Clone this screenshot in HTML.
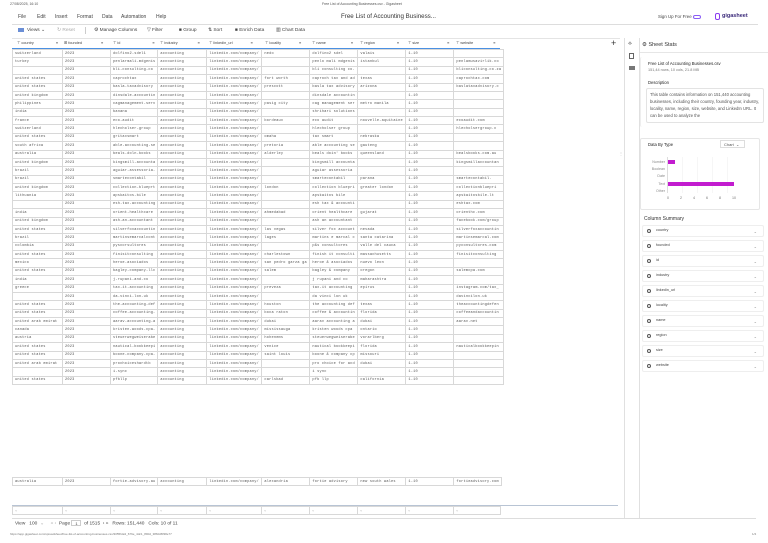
<!DOCTYPE html>
<html><head><meta charset="utf-8"><style>
*{margin:0;padding:0;box-sizing:border-box}
body{width:768px;height:543px;background:#fff;font-family:"Liberation Sans",sans-serif;color:#333;position:relative;overflow:hidden}
.a{position:absolute;white-space:nowrap}
.s4{font-size:4px;color:#555}
.m{font-size:6px;color:#444}
table{position:absolute;left:12px;border-collapse:collapse;table-layout:fixed;font-family:"Liberation Mono",monospace;font-size:3.6px;color:#555}
td{border:0.8px solid #d8d8d8;height:8.38px;line-height:6px;padding:0 2px;overflow:hidden;white-space:nowrap;letter-spacing:0.2px}
td:nth-child(3),td:nth-child(4),td:nth-child(5),td:nth-child(6){border-left:1.5px solid #ccc}
.hd{position:absolute;top:40px;height:8px;font-size:3.8px;color:#444}
.pc{position:absolute;left:640px;width:120px;border:0.8px solid #e6e6e6;border-radius:2px}
.cs{position:absolute;left:642px;width:122px;height:12px;border:0.8px solid #eee;border-radius:2px;font-size:3.8px;color:#444}
.cs span{position:absolute;left:13px;top:2px}
.cs i{position:absolute;left:4px;top:3px;width:4px;height:4px;border:0.8px solid #555;border-radius:50%}
.cs b{position:absolute;right:6px;top:3px;font-weight:normal;font-size:4px;color:#888}
</style></head><body>
<div class="a s4" style="left:10px;top:2px;font-size:3.5px">27/08/2025, 16:10</div>
<div class="a s4" style="left:322px;top:2px;font-size:3.5px">Free List of Accounting Businesses.csv - Gigasheet</div>
<div class="a m" style="left:18px;top:14px;font-size:5px">File</div>
<div class="a m" style="left:37px;top:14px;font-size:5px">Edit</div>
<div class="a m" style="left:55px;top:14px;font-size:5px">Insert</div>
<div class="a m" style="left:77px;top:14px;font-size:5px">Format</div>
<div class="a m" style="left:102px;top:14px;font-size:5px">Data</div>
<div class="a m" style="left:121px;top:14px;font-size:5px">Automation</div>
<div class="a m" style="left:156px;top:14px;font-size:5px">Help</div>
<div class="a" style="left:341px;top:13px;font-size:6.2px;color:#333">Free List of Accounting Business...</div>
<div class="a" style="left:658px;top:14px;font-size:4.4px;color:#444">Sign Up For Free</div>
<div class="a" style="left:693px;top:15px;width:8px;height:4px;border:1px solid #8a5cf6;border-radius:2px"></div>
<div class="a" style="left:715px;top:13px;width:5px;height:7px;border:1.4px solid #8a3cf0;border-radius:2px"></div>
<div class="a" style="left:722px;top:13px;font-size:5.5px;font-weight:bold;color:#3b2a7a">gigasheet</div>
<div class="a" style="left:12px;top:24px;width:746px;height:1px;background:#ddd"></div>
<div class="a" style="left:18px;top:28px;width:6px;height:4px;background:#6b8fd6"></div>
<div class="a m" style="left:27px;top:28px;font-size:4.8px">Views ⌄</div>
<div class="a" style="left:57px;top:28px;font-size:4.8px;color:#aaa">↻ Reset</div>
<div class="a" style="left:85px;top:27px;width:1px;height:7px;background:#ccc"></div>
<div class="a m" style="left:94px;top:28px;font-size:4.8px">⚙ Manage Columns</div>
<div class="a m" style="left:147px;top:28px;font-size:4.8px">▽ Filter</div>
<div class="a m" style="left:179px;top:28px;font-size:4.8px">■ Group</div>
<div class="a m" style="left:208px;top:28px;font-size:4.8px">⇅ Sort</div>
<div class="a m" style="left:235px;top:28px;font-size:4.8px">■ Enrich Data</div>
<div class="a m" style="left:276px;top:28px;font-size:4.8px">▥ Chart Data</div>
<div class="hd" style="left:17px">⊤ country<span style="margin-left:22px">≡</span></div>
<div class="hd" style="left:64px">⊞ founded<span style="margin-left:19px">≡</span></div>
<div class="hd" style="left:113px">⊤ id<span style="margin-left:32px">≡</span></div>
<div class="hd" style="left:160px">⊤ industry<span style="margin-left:20px">≡</span></div>
<div class="hd" style="left:209px">⊤ linkedin_url<span style="margin-left:18px">≡</span></div>
<div class="hd" style="left:265px">⊤ locality<span style="margin-left:18px">≡</span></div>
<div class="hd" style="left:312px">⊤ name<span style="margin-left:25px">≡</span></div>
<div class="hd" style="left:360px">⊤ region<span style="margin-left:22px">≡</span></div>
<div class="hd" style="left:408px">⊤ size<span style="margin-left:28px">≡</span></div>
<div class="hd" style="left:456px">⊤ website<span style="margin-left:20px">≡</span></div>
<div class="a" style="left:12px;top:38px;width:608px;height:1px;background:#e4e4e4"></div>
<div class="a" style="left:611px;top:38px;font-size:9px;color:#333">+</div>
<div class="a" style="left:12px;top:48px;width:488px;height:1px;background:#4a90e2"></div>
<table style="top:49px">
<colgroup><col style="width:50px"><col style="width:48px"><col style="width:47px"><col style="width:49px"><col style="width:55px"><col style="width:48px"><col style="width:48px"><col style="width:48px"><col style="width:48px"><col style="width:47px"></colgroup>
<tr><td>switzerland</td><td>2023</td><td>dolfino2-sdel1</td><td>accounting</td><td>linkedin.com/company/</td><td>nedo</td><td>dolfino2 sdel</td><td>valais</td><td>1-10</td><td></td></tr>
<tr><td>turkey</td><td>2023</td><td>penlarmali-mdgenis</td><td>accounting</td><td>linkedin.com/company/</td><td></td><td>penlo mali mdgenis</td><td>istanbul</td><td>1-10</td><td>penlamusavirlik.co</td></tr>
<tr><td></td><td>2023</td><td>bli-consulting-co</td><td>accounting</td><td>linkedin.com/company/</td><td></td><td>bli consulting co.</td><td></td><td>1-10</td><td>bliconsulting.co.za</td></tr>
<tr><td>united states</td><td>2023</td><td>caprochtax</td><td>accounting</td><td>linkedin.com/company/</td><td>fort worth</td><td>caproch tax and ad</td><td>texas</td><td>1-10</td><td>caprochtax.com</td></tr>
<tr><td>united states</td><td>2023</td><td>basla-taxadvisory</td><td>accounting</td><td>linkedin.com/company/</td><td>prescott</td><td>basla tax advisory</td><td>arizona</td><td>1-10</td><td>baslataxadvisory.c</td></tr>
<tr><td>united kingdom</td><td>2023</td><td>dinsdale-accountin</td><td>accounting</td><td>linkedin.com/company/</td><td></td><td>dinsdale accountin</td><td></td><td>1-10</td><td></td></tr>
<tr><td>philippines</td><td>2023</td><td>cagmanagement-serv</td><td>accounting</td><td>linkedin.com/company/</td><td>pasig city</td><td>cag management ser</td><td>metro manila</td><td>1-10</td><td></td></tr>
<tr><td>india</td><td>2023</td><td>banana</td><td>accounting</td><td>linkedin.com/company/</td><td></td><td>shrihari solutions</td><td></td><td>1-10</td><td></td></tr>
<tr><td>france</td><td>2023</td><td>eco-audit</td><td>accounting</td><td>linkedin.com/company/</td><td>bordeaux</td><td>eco audit</td><td>nouvelle-aquitaine</td><td>1-10</td><td>ecoaudit.com</td></tr>
<tr><td>switzerland</td><td>2023</td><td>hlecholser-group</td><td>accounting</td><td>linkedin.com/company/</td><td></td><td>hlecholser group</td><td></td><td>1-10</td><td>hlecholsergroup.c</td></tr>
<tr><td>united states</td><td>2023</td><td>gritaxsmart</td><td>accounting</td><td>linkedin.com/company/</td><td>omaha</td><td>tax smart</td><td>nebraska</td><td>1-10</td><td></td></tr>
<tr><td>south africa</td><td>2023</td><td>able-accounting-se</td><td>accounting</td><td>linkedin.com/company/</td><td>pretoria</td><td>able accounting se</td><td>gauteng</td><td>1-10</td><td></td></tr>
<tr><td>australia</td><td>2023</td><td>beals-doln-books</td><td>accounting</td><td>linkedin.com/company/</td><td>alderley</td><td>beals doin' books</td><td>queensland</td><td>1-10</td><td>bealsbooks.com.au</td></tr>
<tr><td>united kingdom</td><td>2023</td><td>kingsmill-accounta</td><td>accounting</td><td>linkedin.com/company/</td><td></td><td>kingsmill accounta</td><td></td><td>1-10</td><td>kingsmillaccountan</td></tr>
<tr><td>brazil</td><td>2023</td><td>aguiar-assessoria-</td><td>accounting</td><td>linkedin.com/company/</td><td></td><td>aguiar assessoria</td><td></td><td>1-10</td><td></td></tr>
<tr><td>brazil</td><td>2023</td><td>smartecontabil</td><td>accounting</td><td>linkedin.com/company/</td><td></td><td>smartecontabil</td><td>parana</td><td>1-10</td><td>smartecontabil.</td></tr>
<tr><td>united kingdom</td><td>2023</td><td>collection-blueprt</td><td>accounting</td><td>linkedin.com/company/</td><td>london</td><td>collection bluepri</td><td>greater london</td><td>1-10</td><td>collectionbluepri</td></tr>
<tr><td>lithuania</td><td>2023</td><td>apskaitos-bile</td><td>accounting</td><td>linkedin.com/company/</td><td></td><td>apskaitos bile</td><td></td><td>1-10</td><td>apskaitosbile.lt</td></tr>
<tr><td></td><td>2023</td><td>esh-tax-accounting</td><td>accounting</td><td>linkedin.com/company/</td><td></td><td>esh tax &amp; accounti</td><td></td><td>1-10</td><td>eshtax.com</td></tr>
<tr><td>india</td><td>2023</td><td>orient-healthcare</td><td>accounting</td><td>linkedin.com/company/</td><td>ahmedabad</td><td>orient healthcare</td><td>gujarat</td><td>1-10</td><td>orienthc.com</td></tr>
<tr><td>united kingdom</td><td>2023</td><td>ash-an-accountant</td><td>accounting</td><td>linkedin.com/company/</td><td></td><td>ash an accountant</td><td></td><td>1-10</td><td>facebook.com/group</td></tr>
<tr><td>united states</td><td>2023</td><td>silverfoxaccountin</td><td>accounting</td><td>linkedin.com/company/</td><td>las vegas</td><td>silver fox account</td><td>nevada</td><td>1-10</td><td>silverfoxaccountin</td></tr>
<tr><td>brazil</td><td>2023</td><td>martinsemarcalcont</td><td>accounting</td><td>linkedin.com/company/</td><td>lages</td><td>martins e marcal c</td><td>santa catarina</td><td>1-10</td><td>martinsemarcal.com</td></tr>
<tr><td>colombia</td><td>2023</td><td>pyscorsultores</td><td>accounting</td><td>linkedin.com/company/</td><td></td><td>p&amp;s consultores</td><td>valle del cauca</td><td>1-10</td><td>pyconsultores.com</td></tr>
<tr><td>united states</td><td>2023</td><td>finisitconsulting</td><td>accounting</td><td>linkedin.com/company/</td><td>charlestown</td><td>finish it consulti</td><td>massachusetts</td><td>1-10</td><td>finisitconsulting</td></tr>
<tr><td>mexico</td><td>2023</td><td>heroe-asociados</td><td>accounting</td><td>linkedin.com/company/</td><td>san pedro garza ga</td><td>heroe &amp; asociados</td><td>nuevo leon</td><td>1-10</td><td></td></tr>
<tr><td>united states</td><td>2023</td><td>bagley-company-llc</td><td>accounting</td><td>linkedin.com/company/</td><td>salem</td><td>bagley &amp; company</td><td>oregon</td><td>1-10</td><td>salemcpa.com</td></tr>
<tr><td>india</td><td>2023</td><td>j-rupani-and-co</td><td>accounting</td><td>linkedin.com/company/</td><td></td><td>j rupani and co</td><td>maharashtra</td><td>1-10</td><td></td></tr>
<tr><td>greece</td><td>2023</td><td>tax-it-accounting</td><td>accounting</td><td>linkedin.com/company/</td><td>preveza</td><td>tax-it accounting</td><td>epirus</td><td>1-10</td><td>instagram.com/tax_</td></tr>
<tr><td></td><td>2023</td><td>da-vinci-lon-uk</td><td>accounting</td><td>linkedin.com/company/</td><td></td><td>da vinci lon uk</td><td></td><td>1-10</td><td>davincilon.uk</td></tr>
<tr><td>united states</td><td>2023</td><td>the-accounting-def</td><td>accounting</td><td>linkedin.com/company/</td><td>houston</td><td>the accounting def</td><td>texas</td><td>1-10</td><td>theaccountingdefen</td></tr>
<tr><td>united states</td><td>2023</td><td>coffee-accounting-</td><td>accounting</td><td>linkedin.com/company/</td><td>boca raton</td><td>coffee &amp; accountin</td><td>florida</td><td>1-10</td><td>coffeeandaccountin</td></tr>
<tr><td>united arab emirat</td><td>2023</td><td>aarav-accounting-a</td><td>accounting</td><td>linkedin.com/company/</td><td>dubai</td><td>aarav accounting a</td><td>dubai</td><td>1-10</td><td>aarav.net</td></tr>
<tr><td>canada</td><td>2023</td><td>kristen-woods-cpa-</td><td>accounting</td><td>linkedin.com/company/</td><td>mississauga</td><td>kristen woods cpa</td><td>ontario</td><td>1-10</td><td></td></tr>
<tr><td>austria</td><td>2023</td><td>steuerwegweiserabe</td><td>accounting</td><td>linkedin.com/company/</td><td>hohenems</td><td>steuerwegweiserabe</td><td>vorarlberg</td><td>1-10</td><td></td></tr>
<tr><td>united states</td><td>2023</td><td>nautical-bookkeepi</td><td>accounting</td><td>linkedin.com/company/</td><td>venice</td><td>nautical bookkeepi</td><td>florida</td><td>1-10</td><td>nauticalbookkeepin</td></tr>
<tr><td>united states</td><td>2023</td><td>boone-company-cpa-</td><td>accounting</td><td>linkedin.com/company/</td><td>saint louis</td><td>boone &amp; company cp</td><td>missouri</td><td>1-10</td><td></td></tr>
<tr><td>united arab emirat</td><td>2023</td><td>prochoiceshardtb</td><td>accounting</td><td>linkedin.com/company/</td><td></td><td>pro choice for acd</td><td>dubai</td><td>1-10</td><td></td></tr>
<tr><td></td><td>2023</td><td>i-sync</td><td>accounting</td><td>linkedin.com/company/</td><td></td><td>i sync</td><td></td><td>1-10</td><td></td></tr>
<tr><td>united states</td><td>2023</td><td>pfbllp</td><td>accounting</td><td>linkedin.com/company/</td><td>carlsbad</td><td>pfb llp</td><td>california</td><td>1-10</td><td></td></tr>
</table>
<table style="top:477px">
<colgroup><col style="width:50px"><col style="width:48px"><col style="width:47px"><col style="width:49px"><col style="width:55px"><col style="width:48px"><col style="width:48px"><col style="width:48px"><col style="width:48px"><col style="width:47px"></colgroup>
<tr><td>australia</td><td>2023</td><td>fortie-advisory-au</td><td>accounting</td><td>linkedin.com/company/</td><td>alexandria</td><td>fortie advisory</td><td>new south wales</td><td>1-10</td><td>fortieadvisory.com</td></tr>
</table>
<div class="a" style="left:12px;top:505px;width:606px;height:0.8px;background:#b8c4d4"></div>
<table style="top:506px;color:#999">
<colgroup><col style="width:50px"><col style="width:48px"><col style="width:47px"><col style="width:49px"><col style="width:55px"><col style="width:48px"><col style="width:48px"><col style="width:48px"><col style="width:48px"><col style="width:47px"></colgroup>
<tr><td>⌄</td><td>⌄</td><td>⌄</td><td>⌄</td><td>⌄</td><td>⌄</td><td>⌄</td><td>⌄</td><td>⌄</td><td>⌄</td></tr>
</table>
<div class="a" style="left:12px;top:518px;width:744px;height:1px;background:#ddd"></div>
<div class="a" style="left:624px;top:38px;width:1px;height:480px;background:#e0e0e0"></div>
<div class="a" style="left:639px;top:38px;width:1px;height:480px;background:#e0e0e0"></div>
<div class="a m" style="left:15px;top:520px;font-size:4.8px">View &nbsp; 100 &nbsp;<span style="color:#aaa">⌄ &nbsp; &nbsp; « ‹</span> &nbsp;Page <span style="display:inline-block;width:10px;height:6px;border:0.6px solid #ccc;vertical-align:middle;font-size:4px;text-align:center;line-height:5px">1</span> &nbsp;of 1515 &nbsp;› » &nbsp; Rows: 151,440 &nbsp; Cols: 10 of 11</div>
<div class="a" style="left:10px;top:532px;font-size:3px;color:#777">https://app.gigasheet.com/spreadsheet/free-list-of-accounting-businesses.csv/3055fda3_676e_4dc1_890d_3860d8f38e77</div>
<div class="a" style="left:752px;top:532px;font-size:3px;color:#777">1/4</div>
<div class="a" style="left:628px;top:41px;font-size:6px;color:#555">⟡</div>
<div class="a" style="left:629px;top:53px;width:5px;height:6px;border:0.8px solid #666"></div>
<div class="a" style="left:629px;top:66px;width:6px;height:4px;background:#777"></div>
<div class="a" style="left:619px;top:151px;font-size:4px;color:#999">⋮</div>
<div class="a" style="left:642px;top:42px;font-size:5.5px;color:#333">⚙ Sheet Stats</div>
<div class="a" style="left:640px;top:52px;width:128px;height:1px;background:#e6e6e6"></div>
<div class="pc" style="top:57px;height:70px;border:none;border-left:0.8px solid #eee"></div>
<div class="a" style="left:648px;top:61px;font-size:4.2px;color:#222">Free List of Accounting Businesses.csv</div>
<div class="a" style="left:648px;top:68px;font-size:3.8px;color:#777">151,44 rows, 10 cols, 21.8 MB</div>
<div class="a" style="left:648px;top:80px;font-size:4.2px;color:#222">Description</div>
<div class="a" style="left:646px;top:88px;width:118px;height:35px;border:0.8px solid #e3e3e3;border-radius:2px;font-size:4.2px;color:#555;line-height:7px;padding:2px 3px;white-space:normal">This table contains information on 151,440 accounting businesses, including their country, founding year, industry, locality, name, region, size, website, and LinkedIn URL. It can be used to analyze the</div>
<div class="pc" style="top:138px;height:72px"></div>
<div class="a" style="left:648px;top:142px;font-size:4.2px;color:#222">Data By Type</div>
<div class="a" style="left:720px;top:140px;width:25px;height:8px;border:0.8px solid #ddd;font-size:4px;color:#555;padding:1px 3px">Chart &nbsp;⌄</div>
<div class="a" style="left:647px;top:159px;font-size:3.6px;color:#888;line-height:7.2px;text-align:right;width:18px">Number<br>Boolean<br>Date<br>Text<br>Other</div>
<div class="a" style="left:667px;top:157px;width:65px;height:36px;border-left:0.6px solid #ddd;background:repeating-linear-gradient(90deg,transparent 0 14.5px,#eee 14.5px 15px)"></div>
<div class="a" style="left:668px;top:160px;width:7px;height:4px;background:#c21ccf"></div>
<div class="a" style="left:668px;top:182px;width:66px;height:4px;background:#c21ccf"></div>
<div class="a" style="left:667px;top:196px;font-size:3.6px;color:#777;word-spacing:10px">0 2 4 6 8 10</div>
<div class="a" style="left:644px;top:216px;font-size:5px;color:#333">Column Summary</div>
<div class="cs" style="top:225px"><i></i><span>country</span><b>⌄</b></div>
<div class="cs" style="top:240px"><i></i><span>founded</span><b>⌄</b></div>
<div class="cs" style="top:255px"><i></i><span>id</span><b>⌄</b></div>
<div class="cs" style="top:270px"><i></i><span>industry</span><b>⌄</b></div>
<div class="cs" style="top:285px"><i></i><span>linkedin_url</span><b>⌄</b></div>
<div class="cs" style="top:300px"><i></i><span>locality</span><b>⌄</b></div>
<div class="cs" style="top:315px"><i></i><span>name</span><b>⌄</b></div>
<div class="cs" style="top:330px"><i></i><span>region</span><b>⌄</b></div>
<div class="cs" style="top:345px"><i></i><span>size</span><b>⌄</b></div>
<div class="cs" style="top:360px"><i></i><span>website</span><b>⌄</b></div>
</body></html>
